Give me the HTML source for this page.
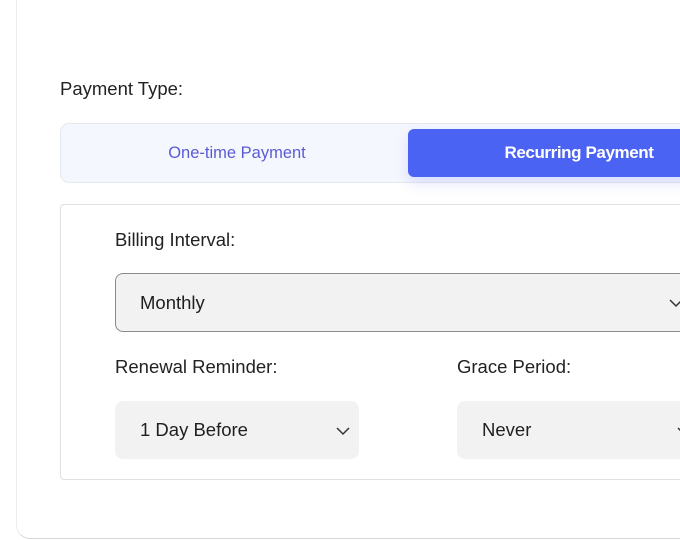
<!DOCTYPE html>
<html><head><style>
*{margin:0;padding:0;box-sizing:border-box}
body{width:680px;height:540px;overflow:hidden;background:#fff;font-family:"Liberation Sans",sans-serif;position:relative;color:#1f1f1f}
.card{position:absolute;left:16px;top:-20px;width:900px;height:559px;border:1px solid #d6d6d6;border-left-color:#ececec;border-radius:14px;background:#fff}
.abs{position:absolute}
.lbl{font-size:18.5px;color:#222}
.toggle{left:60px;top:123px;width:700px;height:60px;background:#f5f7fe;border:1px solid #e6e8ef;border-radius:9px}
.opt{top:0;height:100%;display:flex;align-items:center;justify-content:center;font-size:16.5px}
.active{left:408px;top:129px;width:342px;height:48px;background:#4b63f2;border-radius:6px;color:#fff;font-weight:bold;font-size:17px;display:flex;align-items:center;justify-content:center;box-shadow:0 6px 14px rgba(75,99,242,.18);letter-spacing:-0.4px}
.panel{left:60px;top:204px;width:700px;height:276px;border:1px solid #e0e0e0;border-radius:4px}
.sel{background:#f2f2f2;border-radius:8px;font-size:18.5px;display:flex;align-items:center;padding-left:25px}
.chev{position:absolute;width:16px;height:10px}
</style></head><body>
<div class="card"></div>
<div class="abs lbl" style="left:60px;top:78px">Payment Type:</div>
<div class="abs toggle"></div>
<div class="abs opt" style="left:66px;top:123px;width:342px;height:60px;color:#5a5bd4">One-time Payment</div>
<div class="abs active">Recurring Payment</div>
<div class="abs panel"></div>
<div class="abs lbl" style="left:115px;top:229px">Billing Interval:</div>
<div class="abs sel" style="left:115px;top:273px;width:620px;height:59px;border:1px solid #8a8a8a;padding-left:24px">Monthly</div>
<svg class="chev" style="left:668px;top:298px" viewBox="0 0 16 10"><path d="M2 2 L8 8 L14 2" fill="none" stroke="#333" stroke-width="1.5"/></svg>
<div class="abs lbl" style="left:115px;top:356px">Renewal Reminder:</div>
<div class="abs lbl" style="left:457px;top:356px">Grace Period:</div>
<div class="abs sel" style="left:115px;top:401px;width:244px;height:58px">1 Day Before</div>
<svg class="chev" style="left:335px;top:426px" viewBox="0 0 16 10"><path d="M2 2 L8 8 L14 2" fill="none" stroke="#333" stroke-width="1.5"/></svg>
<div class="abs sel" style="left:457px;top:401px;width:260px;height:58px">Never</div>
<svg class="chev" style="left:676px;top:426px" viewBox="0 0 16 10"><path d="M2 2 L8 8 L14 2" fill="none" stroke="#333" stroke-width="1.5"/></svg>
</body></html>
